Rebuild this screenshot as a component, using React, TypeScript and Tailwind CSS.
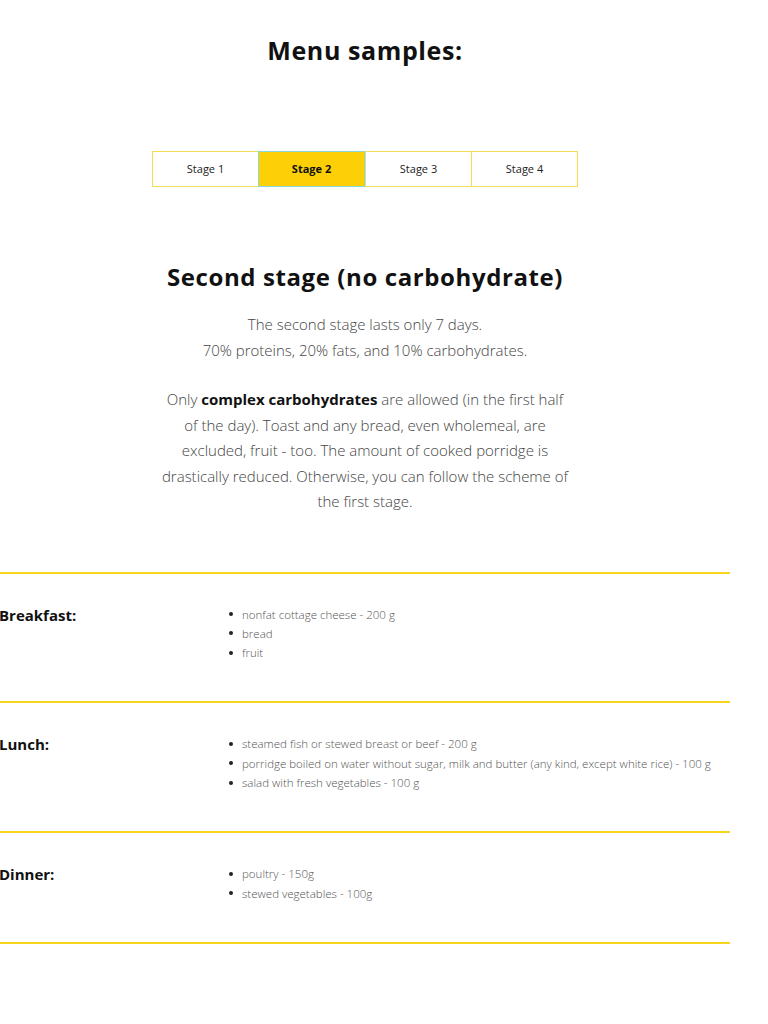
import React from 'react';

const stages = ['Stage 1', 'Stage 2', 'Stage 3', 'Stage 4'];

const meals: { name: string; items: string[] }[] = [
  {
    name: 'Breakfast:',
    items: ['nonfat cottage cheese - 200 g', 'bread', 'fruit'],
  },
  {
    name: 'Lunch:',
    items: [
      'steamed fish or stewed breast or beef - 200 g',
      'porridge boiled on water without sugar, milk and butter (any kind, except white rice) - 100 g',
      'salad with fresh vegetables - 100 g',
    ],
  },
  {
    name: 'Dinner:',
    items: ['poultry - 150g', 'stewed vegetables - 100g'],
  },
];

function StageTabs({ active }: { active: number }) {
  return (
    <div className="mx-auto flex h-[36px] w-[426px] border border-[#f6dc55]">
      {stages.map((label, i) => (
        <div
          key={label}
          className={
            i === active
              ? '-my-[1px] flex flex-1 items-center justify-center border border-[#86d8dc] bg-[#fccf06] text-[11px] font-bold text-[#111]'
              : 'flex flex-1 items-center justify-center border-l border-[#f6dc55] text-[11px] text-[#222] first:border-l-0'
          }
        >
          {label}
        </div>
      ))}
    </div>
  );
}

function MealRow({ name, items }: { name: string; items: string[] }) {
  return (
    <div className="flex border-b-2 border-[#f7d51d] pt-[31px] pb-[39px]">
      <h3 className="-ml-[1px] w-[230px] shrink-0 text-[15px] font-bold leading-[20px] text-[#111]">{name}</h3>
      <ul className="flex flex-col">
        {items.map((item) => (
          <li key={item} className="flex items-center gap-[9px] text-[11.5px] font-light leading-[19.3px] text-[#555]">
            <span className="h-[4px] w-[4px] shrink-0 rounded-full bg-[#222]" />
            {item}
          </li>
        ))}
      </ul>
    </div>
  );
}

export default function App() {
  return (
    <div className="min-h-[1024px] bg-white pb-[80px]" style={{ fontFamily: '"Open Sans", Lato, sans-serif' }}>
      <div className="w-[730px]">
        <h1 className="pt-[33px] text-center text-[25px] font-bold leading-[34px] tracking-[0.6px] text-[#111]">
          Menu samples:
        </h1>

        <div className="pt-[84px]">
          <StageTabs active={1} />
        </div>

        <section className="mx-auto w-[440px] pt-[74px] text-center">
          <h2 className="text-[24px] font-bold leading-[32px] tracking-[0.6px] text-[#111]">
            Second stage (no carbohydrate)
          </h2>
          <p className="mt-[19px] text-[15px] font-light leading-[25.5px] text-[#444]">
            The second stage lasts only 7 days.
            <br />
            70% proteins, 20% fats, and 10% carbohydrates.
          </p>
          <p className="mt-[24px] text-[15px] font-light leading-[25.5px] text-[#444]">
            Only <strong className="font-bold text-[#111]">complex carbohydrates</strong> are allowed (in the first half
            <br />
            of the day). Toast and any bread, even wholemeal, are
            <br />
            excluded, fruit - too. The amount of cooked porridge is
            <br />
            drastically reduced. Otherwise, you can follow the scheme of
            <br />
            the first stage.
          </p>
        </section>

        <div className="mt-[57px] border-t-2 border-[#f7d51d]">
          {meals.map((m) => (
            <MealRow key={m.name} name={m.name} items={m.items} />
          ))}
        </div>
      </div>
    </div>
  );
}
